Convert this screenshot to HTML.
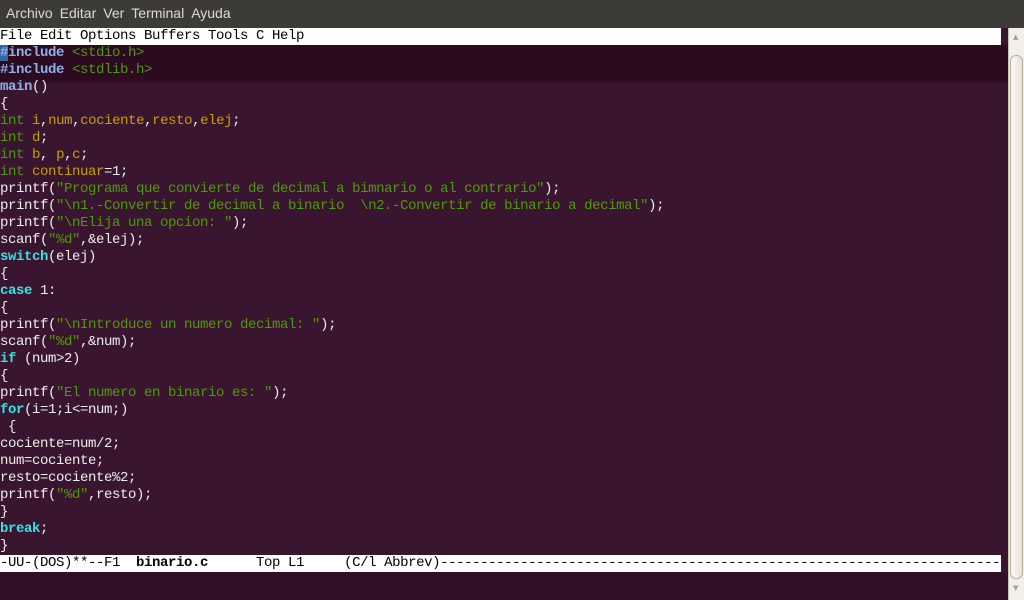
<!DOCTYPE html>
<html><head><meta charset="utf-8"><style>
*{margin:0;padding:0;box-sizing:border-box}
body{width:1024px;height:600px;overflow:hidden;background:#3a1530;font-family:"Liberation Mono",monospace;position:relative}
#top{position:absolute;left:0;top:0;width:1024px;height:28px;background:#3c3b37;color:#dfdbd2;font:14px "Liberation Sans",sans-serif;line-height:26px;padding-left:6px;word-spacing:2px}
#top span{margin-right:7px}
#band{position:absolute;left:0;top:45px;width:1008px;height:36px;background:#2c0b21}
#band2{position:absolute;left:0;top:81px;width:1008px;height:3px;background:#35122b}
#bot{position:absolute;left:0;top:572px;width:1008px;height:28px;background:#301026}
#menu{position:absolute;left:0;top:28px;width:1001px;height:17px;background:#fff;color:#000;font-size:14px;letter-spacing:-0.4px;line-height:17px}
#code{position:absolute;left:0;top:45px;color:#eeeeec;font-size:14px;letter-spacing:-0.4px;line-height:17px;white-space:pre}
#mode{position:absolute;left:0;top:555px;width:1001px;height:17px;background:#fff;color:#000;font-size:14px;letter-spacing:-0.4px;line-height:17px;white-space:pre;overflow:hidden}
.k{color:#34e2e2;font-weight:bold}.t{color:#4e9a06}.v{color:#c4a000}.s{color:#4e9a06}.p{color:#8fb0e8;font-weight:bold}
.cur{background:#3465a4}
#sb{position:absolute;left:1008px;top:28px;width:16px;height:572px;background:#f2efe9;border-left:1px solid #c8c2b5}
#thumb{position:absolute;left:1px;top:27px;width:13px;height:524px;border:1px solid #b8ad98;border-radius:6px;background:linear-gradient(90deg,#fbf9f5,#e8e2d6)}
#sb .a{position:absolute;left:4px;font-size:7px;color:#a89d88;font-family:"DejaVu Sans",sans-serif}
</style></head><body>
<div id="top"><span>Archivo</span><span>Editar</span><span>Ver</span><span>Terminal</span><span>Ayuda</span></div>
<div id="band"></div><div id="band2"></div><div id="bot"></div>
<div id="menu">File Edit Options Buffers Tools C Help</div>
<div id="code"><span class="p"><span class="cur">#</span>include</span> <span class="s">&lt;stdio.h&gt;</span>
<span class="p">#include</span> <span class="s">&lt;stdlib.h&gt;</span>
<span style="color:#8fb0e8;font-weight:bold">main</span>()
{
<span class="t">int</span> <span class="v">i</span>,<span class="v">num</span>,<span class="v">cociente</span>,<span class="v">resto</span>,<span class="v">elej</span>;
<span class="t">int</span> <span class="v">d</span>;
<span class="t">int</span> <span class="v">b</span>, <span class="v">p</span>,<span class="v">c</span>;
<span class="t">int</span> <span class="v">continuar</span>=1;
printf(<span class="s">"Programa que convierte de decimal a bimnario o al contrario"</span>);
printf(<span class="s">"\n1.-Convertir de decimal a binario  \n2.-Convertir de binario a decimal"</span>);
printf(<span class="s">"\nElija una opcion: "</span>);
scanf(<span class="s">"%d"</span>,&amp;elej);
<span class="k">switch</span>(elej)
{
<span class="k">case</span> 1:
{
printf(<span class="s">"\nIntroduce un numero decimal: "</span>);
scanf(<span class="s">"%d"</span>,&amp;num);
<span class="k">if</span> (num&gt;2)
{
printf(<span class="s">"El numero en binario es: "</span>);
<span class="k">for</span>(i=1;i&lt;=num;)
 {
cociente=num/2;
num=cociente;
resto=cociente%2;
printf(<span class="s">"%d"</span>,resto);
}
<span class="k">break</span>;
}</div>
<div id="mode">-UU-(DOS)**--F1  <b>binario.c</b>      Top L1     (C/l Abbrev)------------------------------------------------------------------------</div>
<div id="sb"><div class="a" style="top:5px">▲</div><div id="thumb"></div><div class="a" style="top:556px">▼</div></div>
</body></html>
